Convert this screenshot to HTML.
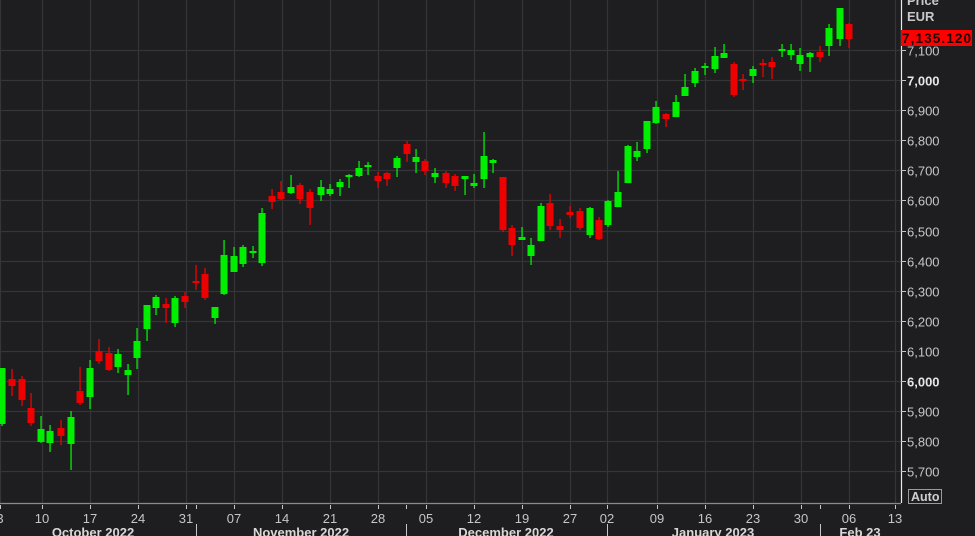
<!DOCTYPE html>
<html><head><meta charset="utf-8"><style>
html,body{margin:0;padding:0;background:#1e1e20;}
svg{display:block;}
text{font-family:"Liberation Sans",sans-serif;}
</style></head><body>
<svg width="975" height="536" viewBox="0 0 975 536" xmlns="http://www.w3.org/2000/svg">
<rect width="975" height="536" fill="#1e1e20"/>
<g id="grid" stroke="#353537" stroke-width="1.2"></g>
<g id="candles"></g>
<line x1="0" y1="503.5" x2="901" y2="503.5" stroke="#8a8a8a" stroke-width="1.2"/>
<line x1="901.5" y1="0" x2="901.5" y2="503" stroke="#e8e8e8" stroke-width="1.2"/>
<g id="axis" fill="#c6c6c6" font-size="13"></g>
<text x="907" y="5" fill="#c8c8c8" font-size="13" font-weight="bold">Price</text>
<text x="907" y="21" fill="#c8c8c8" font-size="13" font-weight="bold">EUR</text>
<rect x="901" y="30" width="71" height="16" fill="#ff0000"/>
<text x="902" y="43" fill="#1a0000" font-size="13.5" font-weight="bold" textLength="69">7,135.120</text>
<rect x="908.5" y="489.5" width="33" height="14" fill="none" stroke="#9a9a9a"/>
<text x="911" y="501" fill="#d0d0d0" font-size="12.5" font-weight="bold">Auto</text>
</svg>
<script>
var NS="http://www.w3.org/2000/svg";
function el(p,t,a,txt){var e=document.createElementNS(NS,t);for(var k in a)e.setAttribute(k,a[k]);if(txt!==undefined)e.textContent=txt;p.appendChild(e);return e;}
var grid=document.getElementById('grid'),axis=document.getElementById('axis'),cg=document.getElementById('candles');
function py(p){return 80+(7000-p)*0.301;}
for(var p=5700;p<=7100;p+=100){var y=Math.round(py(p))+0.5;el(grid,'line',{x1:0,y1:y,x2:901,y2:y});
el(axis,'line',{x1:901,y1:y,x2:906,y2:y,stroke:'#c6c6c6'});
var s=(p/1000|0)+','+String(p%1000).padStart(3,'0');
var t=el(axis,'text',{x:907,y:y+5},s);if(p%1000==0){t.setAttribute('font-weight','bold');t.setAttribute('fill','#e6e6e6');}}
var xs=[[0,'3'],[42,'10'],[90,'17'],[138,'24'],[186,'31'],[234,'07'],[282,'14'],[330,'21'],[378,'28'],[426,'05'],[474,'12'],[522,'19'],[570,'27'],[607,'02'],[657,'09'],[705,'16'],[753,'23'],[801,'30'],[849,'06'],[895,'13']];
xs.forEach(function(d){el(grid,'line',{x1:d[0]+0.5,y1:0,x2:d[0]+0.5,y2:503});
el(axis,'line',{x1:d[0]+0.5,y1:505,x2:d[0]+0.5,y2:509,stroke:'#c6c6c6'});
el(axis,'text',{x:d[0],y:523,'text-anchor':'middle'},d[1]);});
[196,406,607,820].forEach(function(x){el(axis,'line',{x1:x+0.5,y1:505,x2:x+0.5,y2:509,stroke:'#c6c6c6'});el(axis,'line',{x1:x+0.5,y1:524,x2:x+0.5,y2:536,stroke:'#c6c6c6'});});
[[93,'October 2022'],[301,'November 2022'],[506,'December 2022'],[713,'January 2023'],[860,'Feb 23']].forEach(function(m){el(axis,'text',{x:m[0],y:537,'text-anchor':'middle','font-weight':'bold',fill:'#d8d8d8'},m[1]);});
var C=[
[2,368,368,424,426,'g'],[12,369,379,386,396,'r'],[22,376,379,400,406,'r'],[31,393,408,423,426,'r'],[41,416,429,442,443,'g'],[50,425,431,443,452,'g'],[61,420,428,436,445,'r'],[71,411,417,444,470,'g'],[80,367,391,403,405,'r'],[90,360,368,397,409,'g'],[99,339,351,361,364,'r'],[109,347,353,370,371,'r'],[118,349,354,367,373,'g'],[128,364,370,375,395,'g'],[137,328,341,358,369,'g'],[147,305,305,329,341,'g'],[156,295,297,308,315,'g'],[166,298,304,308,323,'r'],[175,296,298,323,327,'g'],[185,292,296,302,308,'r'],
[196,265,281,283,290,'r'],[205,268,274,298,300,'r'],[215,307,307,318,324,'g'],[224,240,255,294,295,'g'],[234,247,256,272,272,'g'],[243,245,247,264,267,'g'],[253,246,251,253,258,'g'],[262,208,213,263,266,'g'],[272,189,196,202,209,'r'],[281,181,192,199,200,'r'],[291,175,187,193,194,'g'],[300,183,185,199,204,'r'],[310,189,192,208,225,'r'],[321,180,187,195,201,'g'],[330,184,189,194,196,'g'],[340,179,182,187,196,'g'],[349,174,175,177,188,'g'],[359,161,168,176,177,'g'],[368,162,165,167,175,'g'],[378,172,176,181,188,'r'],[387,172,173,179,186,'r'],[397,156,158,168,177,'g'],[407,141,144,154,162,'r'],[416,149,157,162,173,'g'],[425,159,161,171,175,'r'],[435,168,173,177,183,'g'],[446,171,173,183,188,'r'],[455,174,176,186,191,'r'],[465,176,176,179,195,'g'],[474,174,183,186,188,'g'],[484,132,156,179,188,'g'],[493,159,160,163,173,'g'],
[503,177,177,230,232,'r'],[512,225,228,245,256,'r'],[522,227,237,240,240,'g'],[531,238,245,256,265,'g'],[541,203,206,241,241,'g'],[550,194,203,226,230,'r'],[560,219,226,230,238,'r'],[570,206,212,215,218,'r'],[580,208,211,228,230,'r'],[590,207,208,235,238,'g'],[599,217,220,239,240,'r'],[608,200,201,225,227,'g'],[618,171,192,207,207,'g'],[628,145,146,183,183,'g'],[637,142,151,157,161,'g'],[647,121,121,149,153,'g'],[656,101,107,123,124,'g'],[666,113,114,119,127,'r'],[676,95,102,117,117,'g'],[685,74,87,96,96,'g'],[695,68,71,83,87,'g'],[705,63,66,68,75,'g'],[715,47,56,69,73,'g'],[724,44,53,58,58,'g'],[734,62,64,95,97,'r'],[743,74,79,81,90,'r'],[753,66,69,76,83,'g'],[763,59,63,65,77,'r'],[772,57,62,67,79,'r'],[782,44,49,51,57,'g'],[791,44,50,55,60,'g'],[800,48,55,64,71,'g'],[810,52,53,57,72,'g'],[820,46,52,57,62,'r'],[829,24,28,46,56,'g'],[840,8,8,39,46,'g'],[849,23,24,39,48,'r']];
C.forEach(function(c){var col=c[5]=='g'?'#00ee00':'#ee0000';
el(cg,'rect',{x:c[0]-0.6,y:c[1],width:1.3,height:c[4]-c[1],fill:col});
el(cg,'rect',{x:c[0]-3.5,y:c[2],width:7,height:Math.max(2,c[3]-c[2]),fill:col});});
</script>
</body></html>
